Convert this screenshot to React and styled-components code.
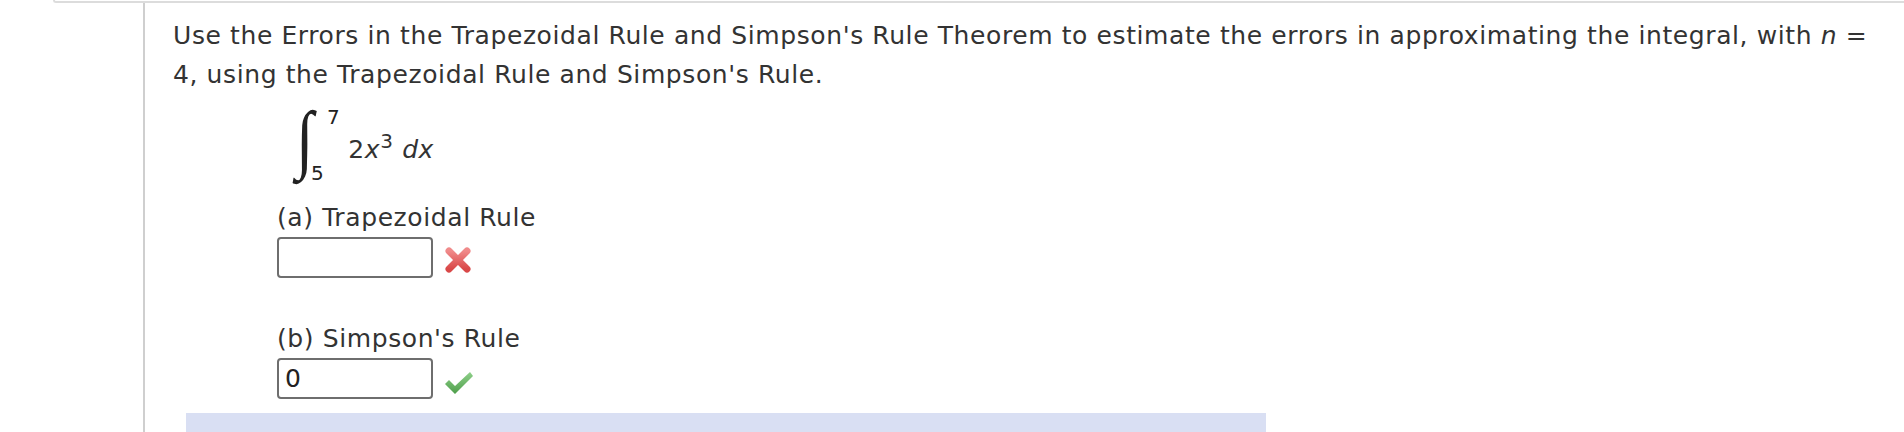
import React from 'react';
import styled, { createGlobalStyle } from 'styled-components';

const GlobalStyle = createGlobalStyle`
  html, body {
    margin: 0;
    padding: 0;
    background: #fff;
  }
  body {
    font-family: "DejaVu Sans", Verdana, sans-serif;
    color: #333;
  }
`;

const Page = styled.div`
  width: 1904px;
  height: 432px;
  overflow: hidden;
  display: flex;
  flex-direction: column;
`;

const TopEdge = styled.div`
  margin-left: 53px;
  height: 1px;
  border-bottom: 2px solid #dcdcdc;
  border-left: 2px solid #dcdcdc;
  border-bottom-left-radius: 4px;
  flex: none;
`;

const Body = styled.div`
  flex: 1;
  display: flex;
`;

const Gutter = styled.div`
  width: 143px;
  flex: none;
`;

const Content = styled.div`
  flex: 1;
  border-left: 2px solid #cfcfcf;
  padding: 13px 24px 0 28px;
  font-size: 25px;
  letter-spacing: 0.6px;
  line-height: 39px;
`;

const Question = styled.p`
  margin: 0;
  max-width: 1702px;
`;

const Var = styled.i`
  font-style: italic;
`;

const Formula = styled.div`
  margin: 13px 0 0 118px;
  display: flex;
  align-items: center;
  height: 76px;
`;

const IntegralSign = styled.span`
  display: inline-block;
  font-family: "Liberation Serif", "DejaVu Serif", serif;
  font-size: 64px;
  line-height: 76px;
  height: 76px;
  transform: translateY(-6px) scaleY(1.19);
  color: #222;
  width: 28px;
  text-align: center;
`;

const Limits = styled.span`
  display: flex;
  flex-direction: column;
  justify-content: space-between;
  height: 76px;
  font-size: 20px;
  line-height: 20px;
  color: #222;
`;

const Upper = styled.span`
  margin-left: 8px;
`;

const Lower = styled.span`
  margin-left: -8px;
`;

const Integrand = styled.span`
  margin-left: 8px;
  padding-top: 8px;
`;

const Sup = styled.sup`
  font-size: 20px;
  line-height: 0;
  position: relative;
  vertical-align: baseline;
  top: -0.5em;
`;

const Part = styled.div`
  margin: ${({ $top }) => $top}px 0 0 104px;
`;

const Label = styled.div``;

const AnswerRow = styled.div`
  display: flex;
  align-items: center;
  gap: 10px;
  height: 41px;
`;

const AnswerBox = styled.div`
  width: 146px;
  height: 37px;
  border: 2px solid #6e6e6e;
  border-radius: 4px;
  line-height: 37px;
  padding-left: 6px;
  color: #222;
  background: #fff;
`;

const IconWrap = styled.span`
  display: inline-flex;
  margin-top: ${({ $dy }) => $dy || 0}px;
`;

const HintBar = styled.div`
  margin: 14px 0 0 13px;
  width: 1080px;
  height: 40px;
  background: #d9dff3;
`;

const CrossIcon = () => (
  <svg width="30" height="28" viewBox="0 0 30 28">
    <defs>
      <linearGradient id="xg" x1="0" y1="0" x2="0" y2="1">
        <stop offset="0" stopColor="#f08a8a" />
        <stop offset="1" stopColor="#d94848" />
      </linearGradient>
    </defs>
    <path d="M6 5 L24 23 M24 5 L6 23" stroke="url(#xg)" strokeWidth="7" strokeLinecap="round" />
  </svg>
);

const CheckIcon = () => (
  <svg width="32" height="26" viewBox="0 0 32 26">
    <defs>
      <linearGradient id="cg" x1="0" y1="0" x2="0" y2="1">
        <stop offset="0" stopColor="#8fd08a" />
        <stop offset="1" stopColor="#4e9e4a" />
      </linearGradient>
    </defs>
    <path d="M2 14 L6 10 L12 16 L27 2 L30 6 L12 24 Z" fill="url(#cg)" strokeLinejoin="round" />
  </svg>
);

const App = () => (
  <Page>
    <GlobalStyle />
    <TopEdge />
    <Body>
      <Gutter />
      <Content>
        <Question>
          Use the Errors in the Trapezoidal Rule and Simpson's Rule Theorem to estimate the errors in
          approximating the integral, with <Var>n</Var> = 4, using the Trapezoidal Rule and Simpson's Rule.
        </Question>
        <Formula>
          <IntegralSign>∫</IntegralSign>
          <Limits>
            <Upper>7</Upper>
            <Lower>5</Lower>
          </Limits>
          <Integrand>
            2<Var>x</Var>
            <Sup>3</Sup> <Var>dx</Var>
          </Integrand>
        </Formula>
        <Part $top={15}>
          <Label>(a) Trapezoidal Rule</Label>
          <AnswerRow>
            <AnswerBox />
            <IconWrap $dy={4}>
              <CrossIcon />
            </IconWrap>
          </AnswerRow>
        </Part>
        <Part $top={41}>
          <Label>(b) Simpson's Rule</Label>
          <AnswerRow>
            <AnswerBox>0</AnswerBox>
            <IconWrap $dy={8}>
              <CheckIcon />
            </IconWrap>
          </AnswerRow>
        </Part>
        <HintBar />
      </Content>
    </Body>
  </Page>
);

export default App;
